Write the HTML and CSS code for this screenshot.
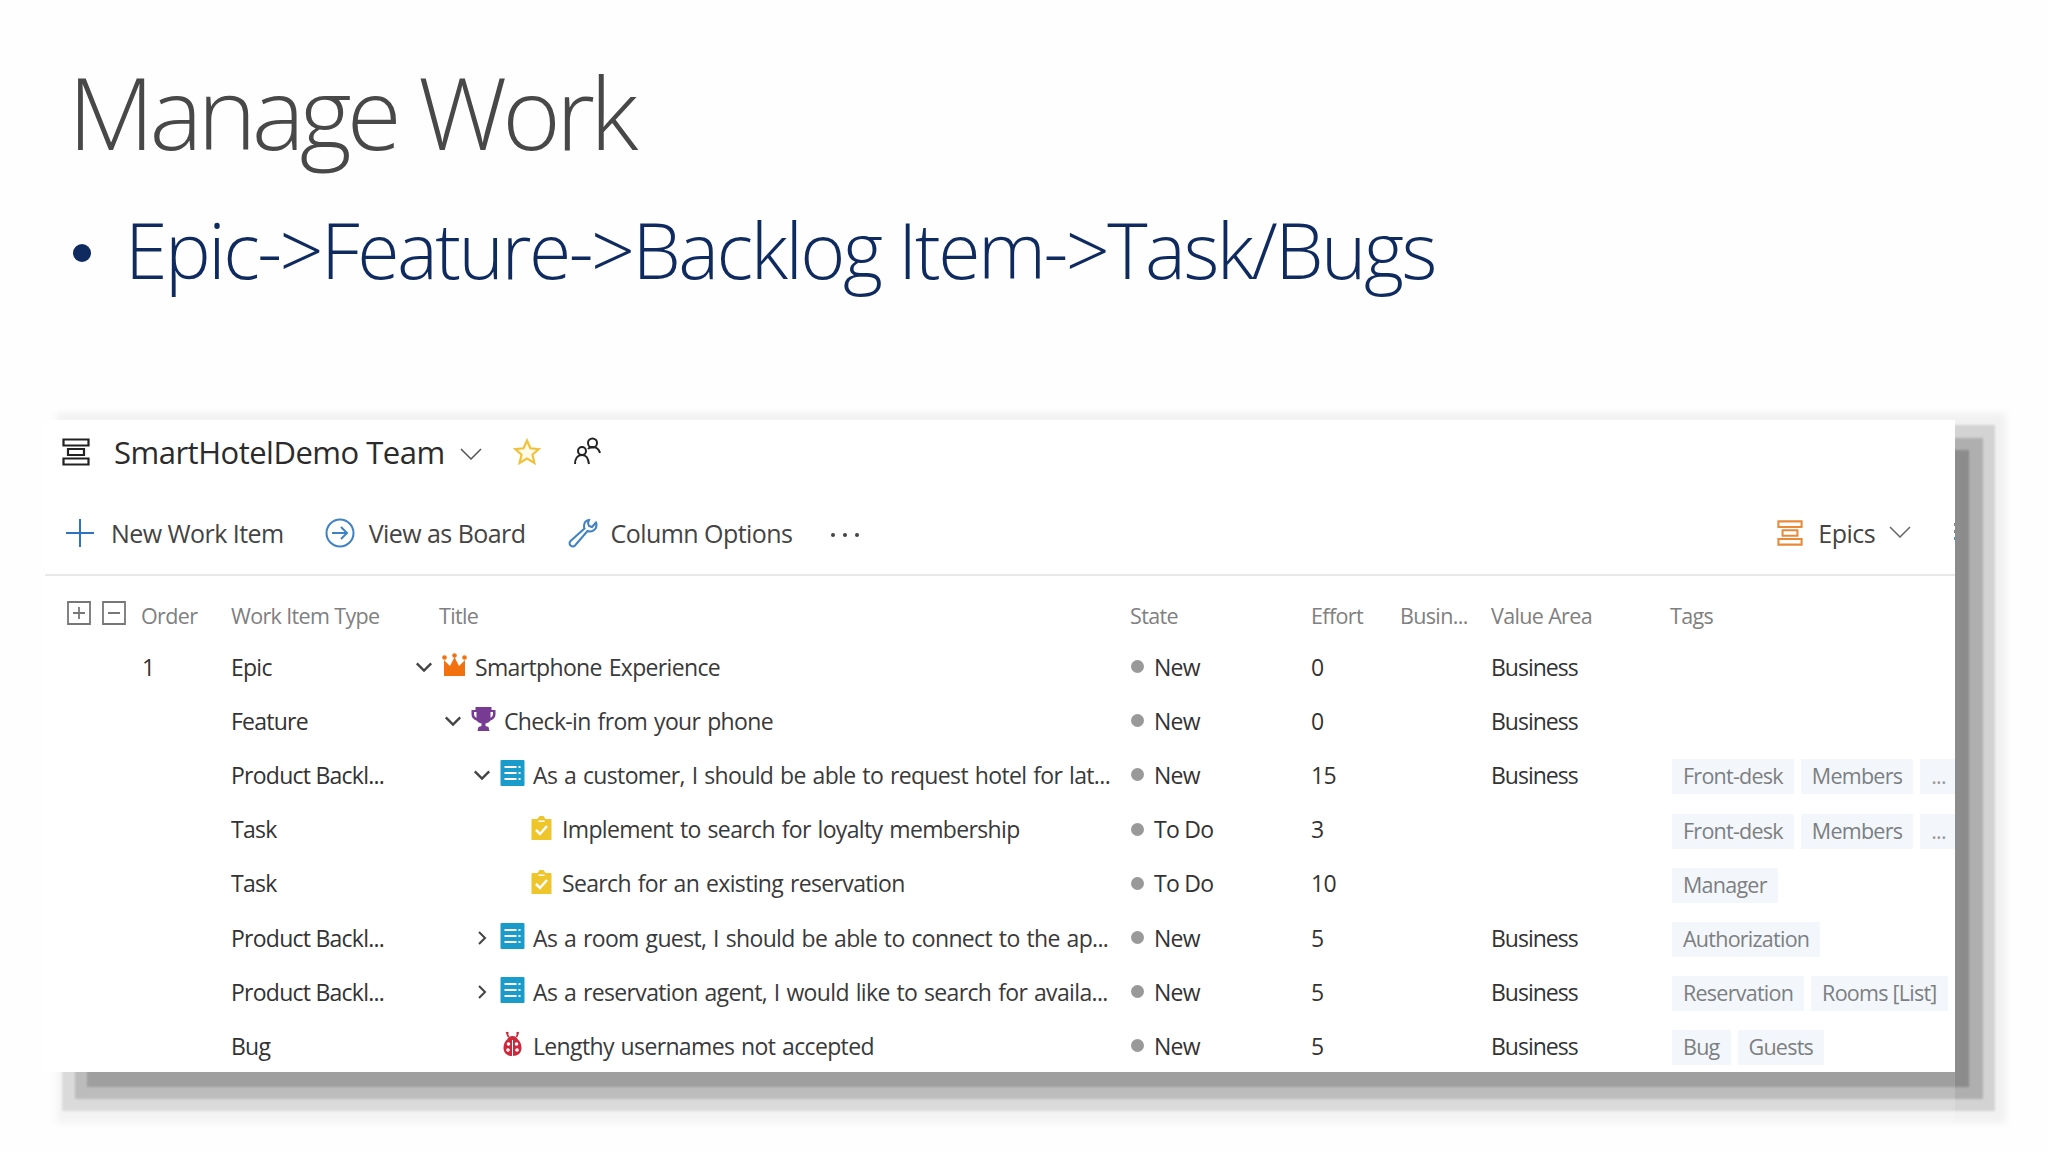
FILE: index.html
```html
<!DOCTYPE html>
<html lang="en">
<head>
<meta charset="utf-8">
<title>Manage Work</title>
<link rel="stylesheet" href="styles.css">
</head>
<body>
<svg class="defs" width="0" height="0" aria-hidden="true">
  <symbol id="i-crown" viewBox="0 0 25 24"><path fill="#f3700f" d="M2 23V7l6 6 4.500-9 4.500 9 6-6v16z"/><g fill="#f3700f"><circle cx="2.500" cy="4.500" r="2.300"/><circle cx="12.500" cy="2.500" r="2.300"/><circle cx="22.500" cy="4.500" r="2.300"/></g></symbol>
  <symbol id="i-trophy" viewBox="0 0 24 26"><path fill="#773b93" d="M4 1h16v3h4v4c0 4-3 6-5 6.500-1 1.500-3 2.500-5 3V20l3 1 1 4H6l1-4 3-1v-2.500c-2-.5-4-1.500-5-3C3 14 0 12 0 8V4h4zM2.500 6v2c0 2 1 3 2.500 3.800V6zm19 0H19v5.800c1.500-.8 2.500-1.800 2.500-3.800z"/></symbol>
  <symbol id="i-story" viewBox="0 0 24 26"><rect width="24" height="26" rx="1" fill="#1a9ccb"/><path stroke="#fff" stroke-width="2" d="M4 7h12M18 7h2M4 13h12M18 13h2M4 19h12M18 19h2" fill="none"/></symbol>
  <symbol id="i-task" viewBox="0 0 20 26"><path fill="#eec52b" d="M1 4h5l2-3h4l2 3h5a1 1 0 0 1 1 1v20H0V5a1 1 0 0 1 1-1z"/><path fill="none" stroke="#fff" stroke-width="2.500" d="M4.500 15l4 4 7-8"/><path fill="#fff" d="M7 5.500h6V7H7z"/></symbol>
  <symbol id="i-bug" viewBox="0 0 22 26"><path fill="none" stroke="#cc293d" stroke-width="1.800" d="M5 1l2 5M17 1l-2 5M5 2h2M15 2h2"/><path fill="#cc293d" d="M11 5c3 0 4.500 1.500 5 3 2.500 2 4 5 4 9 0 5-3.500 8-9 8s-9-3-9-8c0-4 1.500-7 4-9 .5-1.500 2-3 5-3z"/><g fill="#fff"><circle cx="7" cy="13" r="1.800"/><circle cx="15" cy="13" r="1.800"/><circle cx="6.500" cy="19" r="1.800"/><circle cx="15.500" cy="19" r="1.800"/><path d="M10.500 9h1v16h-1z"/></g></symbol>
  <symbol id="i-down" viewBox="0 0 16 10"><path fill="none" stroke="currentColor" stroke-width="2" d="M2 2l6 6 6-6"/></symbol>
  <symbol id="i-right" viewBox="0 0 10 16"><path fill="none" stroke="currentColor" stroke-width="2" d="M2 2l6 6-6 6"/></symbol>
  <symbol id="i-backlog" viewBox="0 0 28 28"><path fill="none" stroke="currentColor" stroke-width="2.200" d="M1.500 1.500h25v6h-25zM6 11h16v6H6zM1.500 20.500h25v6h-25z"/></symbol>
</svg>
<main class="slide">
  <h1 class="slide-title">Manage Work</h1>
  <ul class="bullets"><li>Epic-&gt;Feature-&gt;Backlog Item-&gt;Task/Bugs</li></ul>
  <section class="panel-wrap">
    <div class="sh sh-a"></div>
    <div class="sh sh-b"></div>
    <div class="sh sh-c"></div>
    <div class="sh sh-d"></div>
    <div class="sh sh-fade"></div>
    <div class="panel">
      <header class="teambar">
        <svg class="ic-team"><use href="#i-backlog"/></svg>
        <span class="team-name">SmartHotelDemo Team</span>
        <svg class="ic-teamchev" viewBox="0 0 22 12"><path fill="none" stroke="#555" stroke-width="1.500" d="M1 1l10 10L21 1"/></svg>
        <svg class="ic-star" viewBox="0 0 28 28"><path fill="#fffbe8" stroke="#f0c23c" stroke-width="2.200" d="M14 2.500l3.400 7.800 8.400.8-6.300 5.600 1.900 8.300-7.400-4.400-7.400 4.400 1.900-8.300-6.300-5.600 8.400-.8z"/></svg>
        <svg class="ic-people" viewBox="0 0 28 28"><g fill="none" stroke="#222" stroke-width="2"><circle cx="19.500" cy="6" r="4.500"/><circle cx="9" cy="14" r="4"/><path d="M2 27c0-5 2.500-9 7-9s6 3 7 9M15 12c1-1.500 3-2 4.500-2 4 0 6.500 2.500 7.500 6"/></g></svg>
      </header>
      <nav class="toolbar">
        <div class="tool tool-new">
          <svg class="ic-tool" viewBox="0 0 28 28"><path stroke="#2f72c4" stroke-width="2" d="M14 0v28M0 14h28"/></svg>
          <span>New Work Item</span>
        </div>
        <div class="tool tool-board">
          <svg class="ic-tool" viewBox="0 0 30 30"><circle cx="15" cy="15" r="13.500" fill="none" stroke="#3f82c4" stroke-width="2"/><path fill="none" stroke="#3f82c4" stroke-width="2" d="M7 15h15M16 9l6 6-6 6"/></svg>
          <span>View as Board</span>
        </div>
        <div class="tool tool-columns">
          <svg class="ic-tool" viewBox="0 0 30 30"><path fill="none" stroke="#3f82c4" stroke-width="2" d="M21 2c-3 .5-5 3-5 6 0 1 .2 2 .5 2.500L2.500 23c-1.500 1.500-1 3.500 0 4.500s3 1.500 4.500 0L19.500 13c4 1.500 9-1 9-6 0-1-.2-2-.5-2.500L24 9l-3-1-1-3z"/></svg>
          <span>Column Options</span>
        </div>
        <div class="more"><i></i><i></i><i></i></div>
        <div class="tool tool-epics">
          <svg class="ic-epics"><use href="#i-backlog"/></svg>
          <span>Epics</span>
          <svg class="ic-epicchev" viewBox="0 0 22 12"><path fill="none" stroke="#666" stroke-width="1.500" d="M1 1l10 10L21 1"/></svg>
        </div>
        <div class="vdots"><i></i><i></i><i></i></div>
      </nav>
      <div class="table">
        <div class="row head">
          <div class="expanders">
            <svg class="ic-box" viewBox="0 0 24 24"><path fill="none" stroke="#777" stroke-width="1.800" d="M1 1h22v22H1zM12 6v12M6 12h12"/></svg>
            <svg class="ic-box" viewBox="0 0 24 24"><path fill="none" stroke="#777" stroke-width="1.800" d="M1 1h22v22H1zM6 12h12"/></svg>
          </div>
          <div>Order</div><div>Work Item Type</div><div class="head-title">Title</div><div>State</div><div>Effort</div><div>Busin...</div><div>Value Area</div><div>Tags</div>
        </div>

        <div class="row">
          <div></div><div class="order">1</div><div>Epic</div>
          <div class="title lvl0"><svg class="chev"><use href="#i-down"/></svg><svg class="wi"><use href="#i-crown"/></svg><span>Smartphone Experience</span></div>
          <div class="state"><i></i>New</div><div>0</div><div></div><div class="value">Business</div><div class="tags"></div>
        </div>
        <div class="row">
          <div></div><div></div><div>Feature</div>
          <div class="title lvl1"><svg class="chev"><use href="#i-down"/></svg><svg class="wi"><use href="#i-trophy"/></svg><span>Check-in from your phone</span></div>
          <div class="state"><i></i>New</div><div>0</div><div></div><div class="value">Business</div><div class="tags"></div>
        </div>
        <div class="row">
          <div></div><div></div><div>Product Backl...</div>
          <div class="title lvl2"><svg class="chev"><use href="#i-down"/></svg><svg class="wi"><use href="#i-story"/></svg><span>As a customer, I should be able to request hotel for lat...</span></div>
          <div class="state"><i></i>New</div><div>15</div><div></div><div class="value">Business</div>
          <div class="tags"><span>Front-desk</span><span>Members</span><span class="tag-more">...</span></div>
        </div>
        <div class="row">
          <div></div><div></div><div>Task</div>
          <div class="title lvl3"><span class="chev"></span><svg class="wi wi-task"><use href="#i-task"/></svg><span>Implement to search for loyalty membership</span></div>
          <div class="state"><i></i>To Do</div><div>3</div><div></div><div></div>
          <div class="tags"><span>Front-desk</span><span>Members</span><span class="tag-more">...</span></div>
        </div>
        <div class="row">
          <div></div><div></div><div>Task</div>
          <div class="title lvl3"><span class="chev"></span><svg class="wi wi-task"><use href="#i-task"/></svg><span>Search for an existing reservation</span></div>
          <div class="state"><i></i>To Do</div><div>10</div><div></div><div></div>
          <div class="tags"><span>Manager</span></div>
        </div>
        <div class="row">
          <div></div><div></div><div>Product Backl...</div>
          <div class="title lvl2"><svg class="chev chev-r"><use href="#i-right"/></svg><svg class="wi"><use href="#i-story"/></svg><span>As a room guest, I should be able to connect to the ap...</span></div>
          <div class="state"><i></i>New</div><div>5</div><div></div><div class="value">Business</div>
          <div class="tags"><span>Authorization</span></div>
        </div>
        <div class="row">
          <div></div><div></div><div>Product Backl...</div>
          <div class="title lvl2"><svg class="chev chev-r"><use href="#i-right"/></svg><svg class="wi"><use href="#i-story"/></svg><span>As a reservation agent, I would like to search for availa...</span></div>
          <div class="state"><i></i>New</div><div>5</div><div></div><div class="value">Business</div>
          <div class="tags"><span>Reservation</span><span>Rooms [List]</span></div>
        </div>
        <div class="row">
          <div></div><div></div><div>Bug</div>
          <div class="title lvl2"><span class="chev"></span><svg class="wi wi-bug"><use href="#i-bug"/></svg><span>Lengthy usernames not accepted</span></div>
          <div class="state"><i></i>New</div><div>5</div><div></div><div class="value">Business</div>
          <div class="tags"><span>Bug</span><span>Guests</span></div>
        </div>
      </div>
    </div>
  </section>
</main>
</body>
</html>
```
FILE: styles.css
```css
* { box-sizing: border-box; }
html, body { margin: 0; padding: 0; background: #fefefe; }
body { font-family: "Open Sans", "Noto Sans", sans-serif; color: #333; }
.defs { position: absolute; }
.slide { width: 2048px; height: 1152px; display: flex; flex-direction: column; overflow: hidden; }

.slide-title { margin: 46px 0 0 68px; font-size: 100px; line-height: 130px; font-weight: 300; color: #484848; letter-spacing: -4.900px; }
.bullets { margin: 24px 0 0; padding: 0 0 0 125px; list-style: none; font-size: 77px; line-height: 100px; font-weight: 300; color: #0e2a5f; letter-spacing: -2.500px; }
.bullets li { position: relative; }
.bullets li::before { content: ""; position: absolute; left: -52px; top: 44px; width: 18px; height: 18px; border-radius: 50%; background: #0e2a5f; }

.panel-wrap { position: relative; margin: auto 0 80px 45px; width: 1910px; height: 652px; }
.sh { position: absolute; filter: blur(1px); }
.sh-a { left: 12px; right: -51px; top: -7px; bottom: -51px; background: rgba(0,0,0,.05); filter: blur(3px); }
.sh-b { left: 17px; right: -40px; top: 5px; bottom: -39px; background: rgba(0,0,0,.12); }
.sh-c { left: 30px; right: -28px; top: 18px; bottom: -27px; background: rgba(0,0,0,.17); }
.sh-d { left: 42px; right: -14px; top: 30px; bottom: -15px; background: rgba(0,0,0,.2); }
.sh-fade { left: 0; right: 0; top: 652px; bottom: -51px; background: rgba(255,255,255,.17); filter: none; }

.panel { position: relative; width: 100%; height: 100%; background: #fff; overflow: hidden; }

.teambar { height: 64px; display: flex; align-items: center; padding-left: 17px; color: #222; }
.ic-team { width: 28px; height: 28px; color: #222; }
.team-name { margin-left: 24px; font-size: 31px; letter-spacing: -.5px; color: #2b2b2b; white-space: nowrap; }
.ic-teamchev { width: 22px; height: 12px; margin-left: 15px; margin-top: 4px; }
.ic-star { width: 28px; height: 28px; margin-left: 31px; }
.ic-people { width: 28px; height: 28px; margin-left: 32px; margin-top: -3px; }

.toolbar { height: 82px; margin-top: 8px; display: flex; align-items: center; padding-left: 21px; font-size: 25px; letter-spacing: -.55px; color: #444; white-space: nowrap; }
.tool { display: flex; align-items: center; }
.ic-tool { width: 28px; height: 28px; margin-right: 17px; flex: none; }
.tool-board { margin-left: 41px; }
.tool-board .ic-tool { width: 30px; height: 30px; margin-right: 14px; }
.tool-columns { margin-left: 42px; }
.tool-columns .ic-tool { width: 30px; height: 30px; margin-right: 13px; }
.more { display: flex; gap: 8px; margin-left: 39px; margin-top: 4px; }
.more i { width: 4px; height: 4px; border-radius: 50%; background: #444; }
.tool-epics { margin-left: auto; }
.ic-epics { width: 26px; height: 28px; color: #e98a3a; margin-right: 15px; }
.ic-epicchev { width: 22px; height: 12px; margin-left: 14px; margin-top: -2px; }
.vdots { display: flex; flex-direction: column; gap: 4px; margin-left: 43px; margin-right: -3px; margin-top: -4px; }
.vdots i { width: 4px; height: 3px; background: #888; }
.vdots i:last-child { background: #4a90d0; }

.table { border-top: 2px solid #e8e8ea; padding-top: 18px; font-size: 23px; letter-spacing: -.75px; color: #333; }
.row { display: grid; grid-template-columns: 96px 90px 179px 720px 181px 89px 91px 179px 285px; align-items: center; height: 54.2px; white-space: nowrap; }
.row > div { min-width: 0; }
.head { height: 46px; font-size: 21.500px; color: #808080; letter-spacing: -.65px; margin-top: -2px; margin-bottom: 1.500px; }
.head-title { padding-left: 29px; }
.expanders { display: flex; gap: 11px; padding-left: 22px; margin-top: -5px; }
.ic-box { width: 24px; height: 24px; }
.order { padding-left: 1px; }
.value { letter-spacing: -1px; }

.title { display: flex; align-items: center; color: #3a3a3a; letter-spacing: -.65px; word-spacing: 1.500px; }
.lvl0 { padding-left: 2px; }
.lvl1 { padding-left: 31px; }
.lvl2 { padding-left: 60px; }
.lvl3 { padding-left: 89px; }
.chev { width: 24px; height: 12px; flex: none; color: #444; margin-right: 6px; }
.chev-r { height: 16px; }
.wi { width: 25px; height: 26px; flex: none; margin-right: 8px; margin-top: -3px; }
.wi-task, .wi-bug { width: 25px; }

.state { display: flex; align-items: center; padding-left: 1px; }
.state i { width: 13px; height: 13px; border-radius: 50%; background: #999; margin-right: 10px; }

.tags { display: flex; gap: 7px; padding-left: 2px; font-size: 21.500px; letter-spacing: -.75px; color: #7c7f82; margin-top: 4px; overflow: hidden; }
.tags span { background: #f3f7fb; height: 35px; line-height: 34px; padding: 0 11px; flex: none; }
.tags .tag-more { padding: 0 9px 0 11px; color: #999; }
```
